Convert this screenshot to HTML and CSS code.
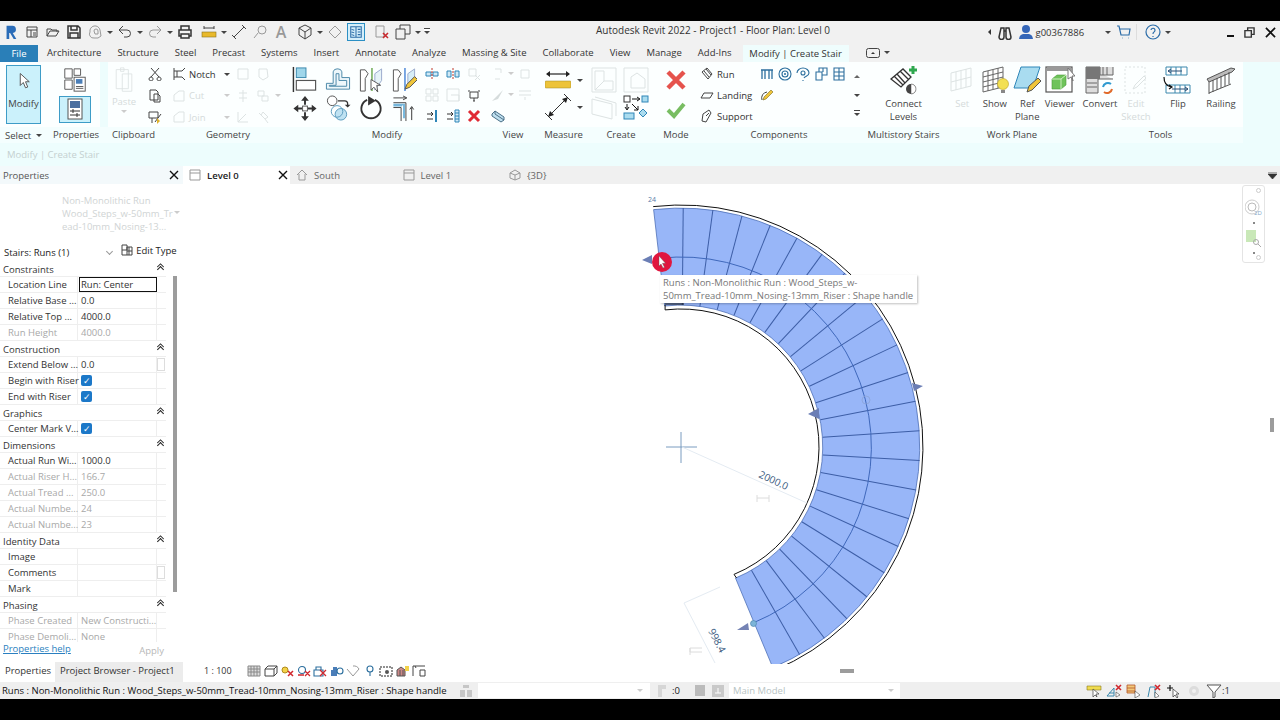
FILE: index.html
```html
<!DOCTYPE html>
<html lang="en">
<head>
  <meta charset="UTF-8" />
  <title>Autodesk Revit 2022 - Project1 - Floor Plan: Level 0</title>
  <link rel="stylesheet" href="styles.css">
</head>
<body>
  <div class="black-bar"></div>

  <!-- Title bar -->
  <header class="title-bar">
    <div class="qat">
      <svg class="qi" viewBox="0 0 16 18"><path d="M3 17V2h6a4 4 0 0 1 1 8l4 7h-3L7 10H6v7z" fill="#2a6cb8"/></svg>
      <svg class="qi" viewBox="0 0 16 16"><path d="M3 3h10v10H3zM3 6h10M7 6v7M9 9h3M9 11h3" class="s-dark"/></svg>
      <svg class="qi" viewBox="0 0 16 16"><path d="M2 12V5h4l1 1h5v2M2 12l3-5h9l-3 5z" class="s-dark"/></svg>
      <svg class="qi" viewBox="0 0 16 16"><path d="M2 2h10l2 2v10H2zM5 2v4h6V2M4 14V9h8v5" class="s-bold"/></svg>
      <svg class="qi" viewBox="0 0 16 16"><path d="M3 8a5 5 0 0 1 10-2l1 6-3 2H7a4 4 0 0 1-4-6zM7 7a2 2 0 0 1 4 0v3H8z" class="s-grey"/></svg>
      <span class="dd"></span>
      <svg class="qi" viewBox="0 0 16 16"><path d="M6 2 2 6l4 4M2 6h8a3.500 3.500 0 0 1 0 7H7" class="s-dark"/></svg>
      <span class="dd"></span>
      <svg class="qi" viewBox="0 0 16 16"><path d="M10 2l4 4-4 4M14 6H6a3.500 3.500 0 0 0 0 7h3" class="s-grey"/></svg>
      <span class="dd"></span>
      <svg class="qi" viewBox="0 0 16 16"><path d="M4 6V2h8v4M4 12H2V6h12v6h-2M4 10h8v4H4z" class="s-bold"/></svg>
      <svg class="qi gap-s" viewBox="0 0 16 16"><path d="M3 2v3M13 2v3M3 4h10" class="s-dark"/><rect x="1" y="8" width="14" height="5" fill="#e9b92b" stroke="#8a7320" stroke-width=".6"/></svg>
      <span class="dd"></span>
      <svg class="qi" viewBox="0 0 16 16"><path d="M3 13 13 3M1 11l4 4M11 1l4 4" class="s-dark"/></svg>
      <svg class="qi" viewBox="0 0 16 16"><circle cx="10" cy="6" r="4" class="s-grey"/><path d="M6 9l-4 5" class="s-grey"/></svg>
      <span class="qa-letter">A</span>
      <svg class="qi gap-s" viewBox="0 0 16 16"><path d="M8 1l6 3v7l-6 4-6-4V4zM2 4l6 4 6-4M8 8v7" class="s-dark"/></svg>
      <span class="dd"></span>
      <svg class="qi" viewBox="0 0 16 16"><path d="M8 2l6 6-6 6-6-6z" class="s-grey"/></svg>
      <div class="qa-active"><svg viewBox="0 0 16 16"><path d="M2 2h12v12H2zM8 2v12M10 5h3M10 8h3M10 11h3M3 5l3 1M3 8l3 1M3 11l3 1" class="s-blue"/></svg></div>
      <svg class="qi gap-m" viewBox="0 0 16 16"><path d="M2 2h8v11H2z" class="s-grey"/><path d="M9 9l5 5M14 9l-5 5" stroke="#c8282d" stroke-width="1.600" fill="none"/></svg>
      <svg class="qi" viewBox="0 0 16 16"><path d="M1 5h9v10H1zM5 5V1h10v9h-5" class="s-dark"/></svg>
      <span class="dd"></span>
      <span class="dd dd-over"></span>
    </div>
    <div class="title-text">Autodesk Revit 2022 - Project1 - Floor Plan: Level 0</div>
    <div class="title-right">
      <span class="dd dd-left"></span>
      <svg class="qi" viewBox="0 0 16 16"><path d="M2 13a2.500 2.500 0 0 0 5 0V4H4zM14 13a2.500 2.500 0 0 1-5 0V4h3zM7 7h2" class="s-bold"/></svg>
      <svg class="qi user" viewBox="0 0 16 16"><circle cx="8" cy="5" r="4" fill="#3566b8"/><path d="M1 15c1-5 3-5 7-5s6 0 7 5z" fill="#3566b8"/></svg>
      <span class="user-name">g00367886</span>
      <span class="dd user-dd"></span>
      <svg class="qi cart" viewBox="0 0 16 16"><path d="M1 2h2l2 9h8l1-6H4M6 14h.5M12 14h.5" class="s-blue"/></svg>
      <span class="sep"></span>
      <svg class="qi help" viewBox="0 0 16 16"><circle cx="8" cy="8" r="7" class="s-blue"/><path d="M6 6a2 2 0 1 1 3 2c-1 .5-1 1-1 2M8 12v1" class="s-blue"/></svg>
      <span class="dd"></span>
      <div class="win-btns">
        <span class="win-min"></span>
        <svg viewBox="0 0 12 12"><path d="M1 4h7v7H1zM4 4V1h7v7H8" class="s-bold"/></svg>
        <svg viewBox="0 0 12 12"><path d="M1 1l10 10M11 1 1 11" stroke="#111" stroke-width="1.800" fill="none"/></svg>
      </div>
    </div>
  </header>

  <!-- Tabs -->
  <nav class="tabs">
    <a class="tab-file">File</a>
    <a>Architecture</a>
    <a>Structure</a>
    <a>Steel</a>
    <a>Precast</a>
    <a>Systems</a>
    <a>Insert</a>
    <a>Annotate</a>
    <a>Analyze</a>
    <a>Massing &amp; Site</a>
    <a>Collaborate</a>
    <a>View</a>
    <a>Manage</a>
    <a>Add-Ins</a>
    <a class="tab-active">Modify | Create Stair</a>
    <svg class="tab-extra" viewBox="0 0 14 10"><rect x=".5" y=".5" width="13" height="9" rx="2" fill="none" stroke="#444"/><path d="M5 6l2-2 2 2z" fill="#333"/></svg>
    <span class="dd"></span>
  </nav>

  <!-- Ribbon -->
  <section class="ribbon">
    <div class="panel p-select">
      <div class="panel-body">
        <div class="modify-btn">
          <svg viewBox="0 0 18 24" width="14" height="18"><path d="M4 2v16l4-4 3 7 3-1-3-7h5z" fill="#fff" stroke="#555" stroke-width="1.300"/></svg>
          <span>Modify</span>
        </div>
      </div>
      <div class="panel-label left">Select <span class="dd"></span></div>
    </div>

    <div class="panel p-props">
      <div class="panel-body col">
        <svg viewBox="0 0 26 28" width="26" height="26"><path d="M2 2h8v10H2zM12 2h7v7h-7zM2 14h8v10H2z" fill="#fff" stroke="#555"/><rect x="12" y="11" width="12" height="15" fill="#fff" stroke="#555"/><rect x="14" y="13" width="7" height="5" fill="#4b7fb8"/><path d="M14 21h8M14 23h8" stroke="#555"/></svg>
        <div class="props-active"><svg viewBox="0 0 20 22" width="20" height="22"><rect x="3" y="1" width="14" height="20" fill="#fff" stroke="#555"/><rect x="5" y="3" width="10" height="7" fill="#4b6fa0"/><path d="M5 13h10M5 17h10M8 11v4M12 15v4" stroke="#333"/></svg></div>
      </div>
      <div class="panel-label">Properties</div>
    </div>

    <div class="panel p-clip">
      <div class="panel-body clip-body">
        <div class="paste">
          <svg viewBox="0 0 22 30" width="22" height="26"><path d="M2 3h14v22H2zM7 1h4v4H7zM9 8h11v20H9z" class="s-off"/></svg>
          <span>Paste</span>
          <span class="dd dd-off"></span>
        </div>
        <div class="stack">
          <svg class="si" viewBox="0 0 14 14"><path d="M3 1l8 9M11 1 3 10M3 10a2 2 0 1 0 .1 0M11 10a2 2 0 1 0 .1 0" class="s-dark"/></svg>
          <svg class="si" viewBox="0 0 14 14"><path d="M2 1h6l2 2v8H2zM6 5h4l2 2v6H6z" class="s-dark"/></svg>
          <svg class="si" viewBox="0 0 14 14"><path d="M1 2h9v6H1zM4 8v5M13 4l-6 8" class="s-dark"/><path d="M9 8l3 3-3 3z" fill="#e0b22a"/></svg>
        </div>
      </div>
      <div class="panel-label">Clipboard</div>
    </div>

    <div class="panel p-geom">
      <div class="panel-body geom-body">
        <div class="geom-row">
          <svg class="si" viewBox="0 0 14 14"><path d="M2 1v12M2 4h8l3-3M2 10h8l3 3M5 4v6" class="s-dark"/></svg>
          <span class="lbl w30">Notch</span><span class="dd"></span>
          <svg class="si off-a" viewBox="0 0 14 14"><path d="M2 2h10v10H2z" class="s-off"/></svg>
          <svg class="si off-b" viewBox="0 0 14 14"><path d="M3 2h8l1 8-5 3-4-3z" class="s-off"/></svg>
        </div>
        <div class="geom-row off">
          <svg class="si" viewBox="0 0 14 14"><path d="M2 12V6l5-4h5v10z" class="s-off"/></svg>
          <span class="lbl w30">Cut</span><span class="dd dd-off"></span>
          <svg class="si off-a" viewBox="0 0 14 14"><path d="M3 4h8M3 9h8M7 1v12" class="s-off"/></svg>
          <svg class="si off-b" viewBox="0 0 14 14"><path d="M2 2h6v5H2zM6 7h6v5H6z" class="s-off"/></svg>
          <span class="dd dd-off"></span>
        </div>
        <div class="geom-row off">
          <svg class="si" viewBox="0 0 14 14"><path d="M2 12V6l5-4h5v10z" class="s-off"/></svg>
          <span class="lbl w30">Join</span><span class="dd dd-off"></span>
          <svg class="si off-a" viewBox="0 0 14 14"><path d="M2 2v10h10M2 12l8-8" class="s-off"/></svg>
          <svg class="si off-b" viewBox="0 0 14 14"><path d="M3 3l5 5M7 2l5 5-3 2-4-4zM9 9l3 4" class="s-off"/></svg>
        </div>
      </div>
      <div class="panel-label">Geometry</div>
    </div>

    <div class="panel p-modify">
      <div class="panel-body">
        <div class="big-grid">
          <svg viewBox="0 0 26 28"><path d="M1 1v26" stroke="#333" stroke-width="1.500"/><rect x="4" y="2" width="10" height="10" fill="#9fd6ea" stroke="#3a88ad"/><rect x="4" y="15" width="20" height="10" fill="#fff" stroke="#555" stroke-width="1.200"/></svg>
          <svg viewBox="0 0 26 28"><path d="M1 24v-6h7V6a4 4 0 0 1 4-3h1a4 4 0 0 1 4 3v6h8v12zM4 21v-1h7V8h3v7h8v6z" fill="#eef7fb" stroke="#4a87a8"/></svg>
          <svg viewBox="0 0 26 28"><path d="M2 4h5l3 4-3 5v13H2z" fill="#fff" stroke="#555"/><path d="M14 2v24" stroke="#6aa84f" stroke-width="1.500"/><path d="M17 8l7-5v12l-7 10z" fill="#e6f3f7" stroke="#9ac"/><path d="M13 14v11l3-3 4 5-1-7h4z" fill="#fff" stroke="#555"/></svg>
          <svg viewBox="0 0 26 28"><path d="M2 4h5l3 4-3 5v13H2z" fill="#fff" stroke="#555"/><path d="M14 2v24" stroke="#4a87d8" stroke-width="1.500"/><path d="M17 8l7-5v10l-7 8z" fill="#d7eef7" stroke="#9ac"/><path d="M14 24l2-5 8-8 3 3-8 8z" fill="#efc53a" stroke="#555"/></svg>
          <svg viewBox="0 0 26 28"><path d="M13 1l4 5h-3v4h-2V6H9zM13 27l4-5h-3v-4h-2v4H9zM1 14l5-4v3h4v2H6v3zM25 14l-5-4v3h-4v2h4v3z" fill="#333"/><rect x="10.500" y="11.500" width="5" height="5" fill="#fff" stroke="#555"/></svg>
          <svg viewBox="0 0 26 28"><circle cx="7" cy="6" r="5" fill="#fff" stroke="#555"/><path d="M13 6h7a3 3 0 0 1 3 3v2" fill="none" stroke="#333" stroke-width="1.300"/><path d="M20 10h6l-3 3z" fill="#333"/><circle cx="16" cy="20" r="6" fill="#bfe2f2" stroke="#5c9bbd"/><circle cx="12" cy="17" r="6" fill="none" stroke="#5c9bbd"/></svg>
          <svg viewBox="0 0 26 28"><path d="M17 5a10 10 0 1 1-8 0" fill="none" stroke="#333" stroke-width="2"/><path d="M10 1l8 5-8 5z" fill="#333"/></svg>
          <svg viewBox="0 0 26 28"><path d="M2 3h13M12 1l4 2-4 2M2 8h13v19M2 13h8v14" fill="none" stroke="#444"/><path d="M2 10h11v14M2 11h9" stroke="#76b7dc" stroke-width="2" fill="none"/><path d="M21 26V13M19 15l2-3 2 3" stroke="#333" fill="none"/></svg>
        </div>
        <div class="small-grid">
          <svg class="si" viewBox="0 0 14 14"><path d="M1 5h5v4H1zM8 5h5v4H8z" fill="#cfe9f6" stroke="#2f86b8"/><path d="M7 1v12" stroke="#c0392b" stroke-dasharray="2 1"/></svg>
          <svg class="si" viewBox="0 0 14 14"><path d="M1 4h4v6H1zM9 4h4v6H9z" fill="#cfe9f6" stroke="#2f86b8"/><path d="M7 1v12" stroke="#c0392b" stroke-dasharray="2 1"/></svg>
          <svg class="si" viewBox="0 0 14 14"><path d="M2 2h7v7H2z" class="s-off"/><path d="M8 8l5 5M13 8l-5 5" class="s-off"/></svg>
          <svg class="si" viewBox="0 0 14 14"><path d="M1 1h5v5H1zM8 1h5v5H8zM1 8h5v5H1zM8 8h5v5H8z" class="s-off"/></svg>
          <svg class="si" viewBox="0 0 14 14"><path d="M1 1h12v12H1zM5 7h8v6" class="s-off"/></svg>
          <svg class="si" viewBox="0 0 14 14"><path d="M3 4h8v6H3zM1 3h2M11 3h2M7 10v3M6 13h2" class="s-dark"/></svg>
          <svg class="si" viewBox="0 0 14 14"><path d="M11 1v12" stroke="#2f86b8" stroke-width="2"/><path d="M2 5h6M6 3l2 2-2 2M2 10h6" stroke="#333" fill="none"/></svg>
          <svg class="si" viewBox="0 0 14 14"><path d="M9 1h4v12H9zM9 4h4M9 7h4M9 10h4" fill="#cfe9f6" stroke="#2f86b8"/><path d="M1 5h6M5 3l2 2-2 2M1 10h6" stroke="#333" fill="none"/></svg>
          <svg class="si" viewBox="0 0 14 14"><path d="M2 2l10 10M12 2 2 12" stroke="#e02b35" stroke-width="3"/></svg>
        </div>
      </div>
      <div class="panel-label">Modify</div>
    </div>

    <div class="panel p-view">
      <div class="panel-body">
        <div class="view-grid">
          <svg class="si" viewBox="0 0 14 14"><path d="M4 2h6v4M4 12h5" class="s-off"/></svg><span class="dd dd-off"></span>
          <svg class="si" viewBox="0 0 14 14"><path d="M3 3h8v8H3z" class="s-off"/></svg>
          <svg class="si" viewBox="0 0 14 14"><path d="M1 13l3-3 8-8-5 9z" fill="#d5dcdc"/></svg><span class="dd dd-off"></span>
          <svg class="si" viewBox="0 0 14 14"><path d="M1 3h12M1 7h12M7 9v3" class="s-off"/></svg>
          <svg class="si" viewBox="0 0 14 14"><path d="M1 5l3-3 9 6v3l-3 2-9-6z" fill="#bfe0f0" stroke="#4a6f86"/><path d="M4 2v3l9 6" fill="none" stroke="#4a6f86"/></svg>
        </div>
      </div>
      <div class="panel-label">View</div>
    </div>

    <div class="panel p-measure">
      <div class="panel-body measure-body">
        <div class="measure-row">
          <svg viewBox="0 0 26 18" width="26" height="18"><path d="M2 3h22" stroke="#222" stroke-width="1.200"/><path d="M5 0 1 3l4 3zM21 0l4 3-4 3z" fill="#222"/><rect x="0" y="10" width="26" height="7" rx="1" fill="#edc33a" stroke="#9c8426" stroke-width=".5"/></svg>
          <span class="dd"></span>
        </div>
        <div class="measure-row">
          <svg viewBox="0 0 26 26" width="26" height="26"><path d="M3 23 23 3M0 19l7 7M19 0l7 7" stroke="#333" fill="none"/><path d="M3 23l6-2-4-4zM23 3l-6 2 4 4z" fill="#222"/></svg>
          <span class="dd"></span>
        </div>
      </div>
      <div class="panel-label">Measure</div>
    </div>

    <div class="panel p-create">
      <div class="panel-body create-grid">
        <svg viewBox="0 0 26 26"><path d="M1 1h24v24H1zM4 4h9v10h9v9H4zM13 14l-9 9" class="s-off"/></svg>
        <svg viewBox="0 0 26 26"><path d="M1 1h24v24H1zM8 10l6-4 8 6v9H8z" class="s-off"/></svg>
        <svg viewBox="0 0 26 26"><path d="M1 4l20 5v15L1 19zM4 2l21 6v13" class="s-off"/></svg>
        <svg viewBox="0 0 26 26"><rect x="1" y="1" width="6" height="6" fill="#fff" stroke="#333"/><path d="M9 4h7M14 2l3 2-3 2M4 9v5M2 12l2 3 2-3M9 9l6 6M15 11v4h-4" stroke="#111" fill="none"/><rect x="19" y="1" width="6" height="6" fill="#aadcef" stroke="#2f86b8"/><rect x="1" y="18" width="10" height="6" fill="#aadcef" stroke="#2f86b8"/><path d="M20 14l4 4-4 4-4-4z" fill="#aadcef" stroke="#2f86b8"/></svg>
      </div>
      <div class="panel-label">Create</div>
    </div>

    <div class="panel p-mode">
      <div class="panel-body mode-col">
        <svg viewBox="0 0 20 20" width="20" height="20"><path d="M2 2l16 16M18 2 2 18" stroke="#e5534d" stroke-width="4.500"/></svg>
        <svg viewBox="0 0 20 18" width="20" height="18"><path d="M2 9l6 6L18 3" fill="none" stroke="#78bd62" stroke-width="4"/></svg>
      </div>
      <div class="panel-label">Mode</div>
    </div>

    <div class="panel p-comp">
      <div class="panel-body comp-body">
        <div class="comp-col">
          <div class="comp-row"><svg class="si" viewBox="0 0 14 14"><path d="M2 5l5-4 5 6-4 5zM4 4l5 6M6 2l5 6" class="s-dark"/></svg><span class="lbl">Run</span></div>
          <div class="comp-row"><svg class="si" viewBox="0 0 14 14"><path d="M1 10l3-5h9l-3 5z" class="s-dark"/></svg><span class="lbl">Landing</span></div>
          <div class="comp-row"><svg class="si" viewBox="0 0 14 14"><path d="M3 5l6-4 2 3-5 9-4-1zM6 7l3-3" class="s-dark"/></svg><span class="lbl">Support</span></div>
        </div>
        <div class="comp-tools">
          <div class="tool-row">
            <svg class="si" viewBox="0 0 14 14"><path d="M1 3h12M2 3v9M5 3v9M9 3v9M12 3v9" stroke="#2c6f9e" stroke-width="1.300" fill="none"/></svg>
            <svg class="si" viewBox="0 0 14 14"><circle cx="7" cy="7" r="6" class="s-teal"/><circle cx="7" cy="7" r="3" class="s-teal"/><circle cx="7" cy="7" r="1" fill="#2c6f9e"/></svg>
            <svg class="si" viewBox="0 0 14 14"><path d="M1 6a6 5 0 0 1 12 0c0 3-4 3-5 5M7 13v1" class="s-teal"/><circle cx="7" cy="6" r="2" class="s-teal"/></svg>
            <svg class="si" viewBox="0 0 14 14"><path d="M5 1h8v7H8v5H2V5h3zM5 5h3v3M9 1v4" class="s-teal"/></svg>
            <svg class="si" viewBox="0 0 14 14"><path d="M2 1h10v12H2zM7 1v12M2 5h10M2 9h10" class="s-teal"/></svg>
          </div>
          <div class="tool-row"><svg class="si" viewBox="0 0 14 14"><path d="M2 12a6 6 0 0 1 5-8" fill="none" stroke="#444"/><path d="M4 9l7-7 2 2-7 7-3 1z" fill="#efc53a" stroke="#7a6a20" stroke-width=".6"/></svg></div>
        </div>
        <div class="comp-arrows"><span class="dd dd-up"></span><span class="dd"></span><span class="dd dd-over"></span></div>
      </div>
      <div class="panel-label">Components</div>
    </div>

    <div class="panel p-multi">
      <div class="panel-body big-row">
        <div class="big-btn w-full">
          <svg viewBox="0 0 30 30"><path d="M2 14l12-10 8 8-10 10zM5 11l9 9M8 9l8 9M11 6l9 9" fill="#fff" stroke="#333" stroke-width="1.300"/><path d="M24 1v8M20 5h8" stroke="#2fa84f" stroke-width="3"/><circle cx="22" cy="24" r="5" fill="#444"/><path d="M22 19a5 5 0 0 1 0 10z" fill="#fff" stroke="#444" stroke-width=".5"/></svg>
          <span>Connect<br>Levels</span>
        </div>
      </div>
      <div class="panel-label">Multistory Stairs</div>
    </div>

    <div class="panel p-plane">
      <div class="panel-body big-row">
        <div class="big-btn w-plane off">
          <svg viewBox="0 0 30 30"><path d="M4 8l20-5v18L4 26zM4 17l20-5M14 5v18M9 7v18M19 4v18" class="s-off"/></svg>
          <span>Set</span>
        </div>
        <div class="big-btn w-plane">
          <svg viewBox="0 0 30 30"><path d="M3 7l20-5v20L3 27zM3 17l20-5M13 5v19M8 6v20M18 3v20M3 12l20-5M3 22l20-5" fill="#fff" stroke="#666"/><circle cx="23" cy="19" r="5.500" fill="#f3e052" stroke="#b99f22" stroke-width=".6"/><rect x="21" y="25" width="4" height="3" fill="#888"/></svg>
          <span>Show</span>
        </div>
        <div class="big-btn w-plane">
          <svg viewBox="0 0 30 30"><path d="M9 2h19l-7 21H2z" fill="#a9dcf0" stroke="#2f86b8"/><path d="M15 27l2-6 9-8 3 3-9 9z" fill="#efc53a" stroke="#555"/></svg>
          <span>Ref<br>Plane</span>
        </div>
        <div class="big-btn w-plane">
          <svg viewBox="0 0 30 30"><rect x="1" y="2" width="26" height="25" fill="#fff" stroke="#555" stroke-width="1.200"/><rect x="2" y="3" width="24" height="3" fill="#999"/><path d="M7 14l5-4h9v10l-5 4H7z" fill="#6fc35a" stroke="#4a9c3a" stroke-width=".6"/><path d="M7 14h9v10M16 14l5-4" stroke="#cdeebe" fill="none"/><path d="M23 3v11l3-2 2 4-1-5h3z" fill="#fff" stroke="#777"/></svg>
          <span>Viewer</span>
        </div>
      </div>
      <div class="panel-label">Work Plane</div>
    </div>

    <div class="panel p-tools">
      <div class="panel-body big-row">
        <div class="big-btn w-conv">
          <svg viewBox="0 0 30 30"><path d="M1 2h14v8h13V2M1 2v26h12V14h15" fill="#ddd" stroke="#666"/><path d="M1 2h14v12H1z" fill="#777"/><path d="M2 18h10M2 22h10M18 2v8M22 2v8" stroke="#666"/><path d="M18 22a5 5 0 0 1 8-3" stroke="#2f9ad0" stroke-width="2" fill="none"/><path d="M27 24a5 5 0 0 1-8 3" stroke="#e06a2a" stroke-width="2" fill="none"/></svg>
          <span>Convert</span>
        </div>
        <div class="big-btn w-edit off">
          <svg viewBox="0 0 30 30"><path d="M4 2h20v26H4z" class="s-off" stroke-dasharray="2 2"/><path d="M12 24l2-4 9-9 2 2-9 9z" class="s-off"/></svg>
          <span>Edit<br>Sketch</span>
        </div>
        <div class="big-btn w-flip">
          <svg viewBox="0 0 30 30"><path d="M3 2h21v8H3zM3 20h24v8H3zM8 2v8M13 2v8M18 2v8M12 20v8M17 20v8M22 20v8" fill="#fff" stroke="#3a88ad"/><path d="M5 6h14M8 4 5 6l3 2M9 24h16M22 22l3 2-3 2" stroke="#2c4f74" fill="none"/><path d="M1 12c0 6 2 9 7 10M6 20l3 2-3 2" stroke="#111" stroke-width="1.200" fill="none"/></svg>
          <span>Flip</span>
        </div>
        <div class="big-btn w-rail">
          <svg viewBox="0 0 30 30"><path d="M1 14 25 3l4 1-3 3L3 17zM3 17v12M7 15v12M11 13v12M15 11v12M19 9v12M23 7v12" fill="#bbb" stroke="#555"/><path d="M3 28l22-9" stroke="#555"/></svg>
          <span>Railing</span>
        </div>
      </div>
      <div class="panel-label">Tools</div>
    </div>
  </section>

  <div class="options-bar">Modify | Create Stair</div>

  <!-- Main -->
  <main class="workspace">
    <aside class="props">
      <div class="props-head"><span>Properties</span><svg viewBox="0 0 10 10" width="10" height="10"><path d="M1 1l8 8M9 1 1 9" stroke="#111" stroke-width="1.400"/></svg></div>
      <div class="type-sel">
        <div>Non-Monolithic Run<br>Wood_Steps_w-50mm_Tr<br>ead-10mm_Nosing-13...</div>
        <span class="dd dd-off"></span>
      </div>
      <div class="inst-row">
        <span>Stairs: Runs (1)</span>
        <span class="chev"></span>
        <svg viewBox="0 0 12 12" width="12" height="12"><path d="M1 1h5v5H1zM6 3h5v8H6zM1 6v5h5M6 7h5M8 3v8" class="s-dark"/></svg>
        <span class="edit-type">Edit Type</span>
      </div>
      <div class="prop-list">
        <div class="prop-group">Constraints<i></i></div>
        <div class="prop-row"><span>Location Line</span><span class="val-box">Run: Center</span></div>
        <div class="prop-row"><span>Relative Base ...</span><span>0.0</span></div>
        <div class="prop-row"><span>Relative Top ...</span><span>4000.0</span></div>
        <div class="prop-row muted"><span>Run Height</span><span>4000.0</span></div>
        <div class="prop-group">Construction<i></i></div>
        <div class="prop-row"><span>Extend Below ...</span><span>0.0</span><b class="mini"></b></div>
        <div class="prop-row"><span>Begin with Riser</span><span><em class="check">✓</em></span></div>
        <div class="prop-row"><span>End with Riser</span><span><em class="check">✓</em></span></div>
        <div class="prop-group">Graphics<i></i></div>
        <div class="prop-row"><span>Center Mark V...</span><span><em class="check">✓</em></span></div>
        <div class="prop-group">Dimensions<i></i></div>
        <div class="prop-row"><span>Actual Run Wi...</span><span>1000.0</span></div>
        <div class="prop-row muted"><span>Actual Riser H...</span><span>166.7</span></div>
        <div class="prop-row muted"><span>Actual Tread ...</span><span>250.0</span></div>
        <div class="prop-row muted"><span>Actual Numbe...</span><span>24</span></div>
        <div class="prop-row muted"><span>Actual Numbe...</span><span>23</span></div>
        <div class="prop-group">Identity Data<i></i></div>
        <div class="prop-row"><span>Image</span><span></span></div>
        <div class="prop-row"><span>Comments</span><span></span><b class="mini"></b></div>
        <div class="prop-row"><span>Mark</span><span></span></div>
        <div class="prop-group">Phasing<i></i></div>
        <div class="prop-row muted"><span>Phase Created</span><span>New Constructi...</span></div>
        <div class="prop-row muted"><span>Phase Demoli...</span><span>None</span></div>
        <div class="prop-scroll"></div>
      </div>
      <div class="props-foot"><a>Properties help</a><span>Apply</span></div>
      <div class="props-tabs"><span class="on">Properties</span><span>Project Browser - Project1</span></div>
    </aside>

    <div class="view-area">
      <div class="view-tabs">
        <div class="vtab vtab-on">
          <svg viewBox="0 0 12 12" width="12" height="12"><path d="M1 1h10v10H1zM1 4h10" class="s-grey"/></svg>
          <span>Level 0</span>
          <svg class="vtab-x" viewBox="0 0 10 10" width="10" height="10"><path d="M1 1l8 8M9 1 1 9" stroke="#111" stroke-width="1.400"/></svg>
        </div>
        <div class="vtab"><svg viewBox="0 0 12 12" width="12" height="12"><path d="M1 6l5-5 5 5M3 5v6h6V5" class="s-grey"/></svg><span>South</span></div>
        <div class="vtab"><svg viewBox="0 0 12 12" width="12" height="12"><path d="M1 1h10v10H1zM1 4h10" class="s-grey"/></svg><span>Level 1</span></div>
        <div class="vtab"><svg viewBox="0 0 12 12" width="12" height="12"><path d="M6 1l5 3v5l-5 2-5-2V4zM1 4l5 2 5-2M6 6v5" class="s-grey"/></svg><span>{3D}</span></div>
        <svg class="vtab-more" viewBox="0 0 9 7" width="9" height="7"><path d="M0 0h9M0 2h9l-4.500 5z" stroke="#333" fill="#333" stroke-width=".7"/></svg>
      </div>

      <div class="canvas">
        <svg class="drawing" viewBox="186 184 1094 498" width="1094" height="498">
          <defs>
            <line id="riser" x1="681" y1="305" x2="681" y2="208" stroke="#3d5ea6" stroke-width="1"/>
          </defs>
          <!-- stair run: centre 681,447 -->
          <path d="M653.600 209.600A239 239 0 0 1 772.800 667.600L735.500 578.100A142 142 0 0 0 664.700 306Z" fill="#98b6f8" stroke="#3f63ad" stroke-width=".7"/>
          <use href="#riser" transform="rotate(.53 681 447)"/>
          <use href="#riser" transform="rotate(7.66 681 447)"/>
          <use href="#riser" transform="rotate(14.79 681 447)"/>
          <use href="#riser" transform="rotate(21.92 681 447)"/>
          <use href="#riser" transform="rotate(29.05 681 447)"/>
          <use href="#riser" transform="rotate(36.18 681 447)"/>
          <use href="#riser" transform="rotate(43.31 681 447)"/>
          <use href="#riser" transform="rotate(50.44 681 447)"/>
          <use href="#riser" transform="rotate(57.57 681 447)"/>
          <use href="#riser" transform="rotate(64.70 681 447)"/>
          <use href="#riser" transform="rotate(71.83 681 447)"/>
          <use href="#riser" transform="rotate(78.96 681 447)"/>
          <use href="#riser" transform="rotate(86.09 681 447)"/>
          <use href="#riser" transform="rotate(93.22 681 447)"/>
          <use href="#riser" transform="rotate(100.35 681 447)"/>
          <use href="#riser" transform="rotate(107.48 681 447)"/>
          <use href="#riser" transform="rotate(114.61 681 447)"/>
          <use href="#riser" transform="rotate(121.74 681 447)"/>
          <use href="#riser" transform="rotate(128.87 681 447)"/>
          <use href="#riser" transform="rotate(136 681 447)"/>
          <use href="#riser" transform="rotate(143.13 681 447)"/>
          <use href="#riser" transform="rotate(150.26 681 447)"/>
          <!-- walk line -->
          <path d="M659.100 258.300A190 190 0 0 1 753.900 622.600" fill="none" stroke="#3f68bb" stroke-width="1"/>
          <!-- boundaries -->
          <path d="M653.200 206.600A242 242 0 0 1 774 670.400" fill="none" stroke="#111" stroke-width="1"/>
          <path d="M665.100 305V309.900A138 138 0 0 1 734 574.400L736.500 578" fill="none" stroke="#111" stroke-width="1"/>
          <path d="M665 304H684" stroke="#111" stroke-width="1"/>
          <!-- view crop at the bottom -->
          <rect x="186" y="664" width="900" height="18" fill="#fff"/>
          <!-- centre mark and dimensions -->
          <path d="M666 447H697M681 432V463" stroke="#7b9cc0" stroke-width="1"/>
          <path d="M682 447 807 503" stroke="#e4ebf2" stroke-width="1"/>
          <text x="0" y="0" transform="translate(758 477) rotate(25)" class="dim">2000.0</text>
          <path d="M757 495v7M769 495v7M757 498h12" stroke="#dcdcdc" fill="none"/>
          <path d="M684 603 715 663M684 603 720 587" stroke="#e4ebf2" fill="none"/>
          <text x="0" y="0" transform="translate(708 631) rotate(62)" class="dim">998.4</text>
          <path d="M690 648v7M702 648H690v4h12" stroke="#dcdcdc" fill="none"/>
          <text x="648" y="202" class="dim-s">24</text>
          <!-- shape handles -->
          <path d="M642 260l10-5v9z" fill="#6b7eb5"/>
          <path d="M912 383l11 3-9 5z" fill="#6b7eb5"/>
          <path d="M808 414l11-6v11z" fill="#6b7eb5"/>
          <path d="M737 630l11-7 1 7z" fill="#7583b4"/>
          <circle cx="753.500" cy="623.500" r="3" fill="#7cb4d8" stroke="#4f88b0" stroke-width=".7"/>
          <circle cx="866" cy="400" r="4" fill="none" stroke="#8aa2d4" stroke-width=".7"/>
          <!-- cursor highlight -->
          <circle cx="662" cy="262" r="10" fill="#e0163f"/>
          <path d="M659 256v10l2-2 2 4 1.500-.700-2-4h3z" fill="#fff" stroke="#555" stroke-width=".4"/>
        </svg>

        <div class="tooltip">Runs : Non-Monolithic Run : Wood_Steps_w-<br>50mm_Tread-10mm_Nosing-13mm_Riser : Shape handle</div>

        <div class="nav-bar">
          <i class="nav-dot nav-top"></i>
          <svg viewBox="0 0 18 20" width="18" height="20"><circle cx="7" cy="9" r="4" fill="none" stroke="#bbb"/><circle cx="7" cy="9" r="7" fill="none" stroke="#ccc"/><text x="9" y="17" class="nav-2d">2D</text></svg>
          <i class="nav-pip"></i>
          <svg viewBox="0 0 18 20" width="18" height="20"><rect x="1" y="2" width="10" height="12" fill="#c9e8b8"/><circle cx="11" cy="14" r="2.500" fill="none" stroke="#aaa"/><path d="M13 16l3 3" stroke="#aaa"/></svg>
          <i class="nav-pip"></i>
          <i class="nav-dot nav-bot"></i>
        </div>

        <div class="vscroll"></div>
        <div class="hscroll"></div>

        <div class="view-ctrl">
          <span class="scale">1 : 100</span>
          <svg viewBox="0 0 14 12" width="14" height="12"><path d="M1 1h12v10H1zM1 4h12M1 7h12M4 1v10M7 1v10M10 1v10" stroke="#888" fill="#ddd"/></svg>
          <svg viewBox="0 0 14 12" width="14" height="12"><path d="M1 4h9v7H1zM1 4l3-3h9v7l-3 3M10 4l3-3" class="s-dark"/></svg>
          <svg viewBox="0 0 14 12" width="14" height="12"><circle cx="5" cy="5" r="3" fill="#f3d24a" stroke="#b08b1c"/><path d="M8 6l5 5M13 6l-5 5" stroke="#d0282e" stroke-width="1.500"/></svg>
          <svg viewBox="0 0 14 12" width="14" height="12"><circle cx="5" cy="5" r="3.500" class="s-teal"/><path d="M1 10h6M8 6l5 5M13 6l-5 5" stroke="#d0282e" stroke-width="1.300" fill="none"/></svg>
          <svg viewBox="0 0 14 12" width="14" height="12"><path d="M1 5h9v6H1zM3 5V2h5v3" class="s-teal"/><path d="M7 5l6 6M13 5l-6 6" stroke="#d0282e" stroke-width="1.300"/></svg>
          <svg viewBox="0 0 14 12" width="14" height="12"><path d="M1 5h6v6H1zM3 5V2h4v3" fill="#4a7db8"/><circle cx="10" cy="6" r="3" class="s-teal"/></svg>
          <svg viewBox="0 0 14 12" width="14" height="12"><path d="M1 4l6 7 6-7a6 6 0 0 0-6-3" class="s-grey"/></svg>
          <svg viewBox="0 0 14 12" width="14" height="12"><circle cx="7" cy="4" r="3" class="s-teal"/><path d="M7 7v4" class="s-teal"/></svg>
          <svg viewBox="0 0 14 12" width="14" height="12"><path d="M1 2h12v9H1z" stroke="#222" fill="none" stroke-dasharray="2 1"/><circle cx="8" cy="7" r="2" fill="#555"/></svg>
          <svg viewBox="0 0 14 12" width="14" height="12"><path d="M1 5l4-3 4 3v6H1zM4 5v6M7 5v6" fill="#c88" stroke="#555"/><path d="M9 1h4v5H9z" fill="#f3d24a"/></svg>
          <svg viewBox="0 0 14 12" width="14" height="12"><path d="M1 1v10M1 1h12M3 1l1 2M8 5h5v6H8z" class="s-dark"/></svg>
        </div>
      </div>
    </div>
  </main>

  <!-- Status bar -->
  <footer class="status">
    <span class="status-text">Runs : Non-Monolithic Run : Wood_Steps_w-50mm_Tread-10mm_Nosing-13mm_Riser : Shape handle</span>
    <svg class="st-wk" viewBox="0 0 14 14" width="14" height="14"><path d="M4 1h6v3H4zM1 6h5v7H1zM8 6h5v7H8z" fill="#c6c6c6"/></svg>
    <div class="st-field st-wf"><span class="dd dd-off"></span></div>
    <svg class="st-sync" viewBox="0 0 12 14" width="12" height="14"><path d="M3 1h8v4H7v8H3z" fill="#d6d6d6"/></svg>
    <span class="st-zero">:0</span>
    <span class="st-box"></span>
    <svg class="st-wk2" viewBox="0 0 12 12" width="12" height="12"><rect width="12" height="12" fill="#c9c9c9"/><path d="M3 8h6M6 3v5" stroke="#fff"/></svg>
    <div class="st-field st-model"><span>Main Model</span><span class="dd dd-off"></span></div>
    <div class="st-right">
      <svg viewBox="0 0 16 14" width="16" height="14"><path d="M1 2h14v4H1z" fill="#f0dc50" stroke="#8a7b20" stroke-width=".6"/><path d="M7 5v8l2-2 2 2-1-3h3z" fill="#fff" stroke="#444" stroke-width=".7"/></svg>
      <svg viewBox="0 0 16 14" width="16" height="14"><path d="M1 12 8 4v8zM3 9h5" fill="none" stroke="#3a88ad"/><path d="M10 1l5 5M15 1l-5 5" stroke="#d0282e" stroke-width="1.600"/><path d="M10 8v5l4-2z" fill="#fff" stroke="#444" stroke-width=".6"/></svg>
      <svg viewBox="0 0 16 14" width="16" height="14"><path d="M1 1h8v8H1zM1 4h8M1 7h8" fill="#f2c87a" stroke="#b4562a" stroke-width=".8"/><path d="M9 7v7l5-3z" fill="#fff" stroke="#444" stroke-width=".6"/></svg>
      <svg viewBox="0 0 16 14" width="16" height="14"><path d="M2 13 4 3h5v10" fill="none" stroke="#3a88ad"/><path d="M9 1l5 5M14 1 9 6" stroke="#d0282e" stroke-width="1.600"/><path d="M9 8v6l4-2z" fill="#fff" stroke="#444" stroke-width=".6"/></svg>
      <svg viewBox="0 0 16 14" width="16" height="14"><path d="M1 4h6M4 1v6" stroke="#111" stroke-width="1.200"/><path d="M7 5v8l2-2 2 3 1-1-2-3h3z" fill="#fff" stroke="#333" stroke-width=".7"/></svg>
      <svg viewBox="0 0 16 14" width="16" height="14"><circle cx="8" cy="7" r="5" fill="#dcdcdc"/><circle cx="8" cy="7" r="2" fill="#f0f0f0"/></svg>
      <svg viewBox="0 0 16 14" width="16" height="14"><path d="M1 1h14L9 8v5l-2 1V8z" fill="#fff" stroke="#555"/></svg>
      <span class="st-one">:1</span>
    </div>
  </footer>
  <div class="black-bar"></div>
</body>
</html>
```

FILE: styles.css
```css
* {
  box-sizing: border-box;
}

html, body {
  margin: 0;
  height: 720px;
  overflow: hidden;
}

body {
  font-family: 'Open Sans', 'Noto Sans', sans-serif;
  font-size: 9.500px;
  color: #333;
  background: #000;
  display: flex;
  flex-direction: column;
}

svg {
  display: block;
  flex: none;
}

.black-bar {
  height: 21px;
  background: #000;
  flex: none;
}

/* shared strokes */
.s-dark { fill: none; stroke: #444; stroke-width: 1; }
.s-bold { fill: none; stroke: #333; stroke-width: 1.5; }
.s-grey { fill: none; stroke: #999; stroke-width: 1; }
.s-blue { fill: none; stroke: #2b6ca8; stroke-width: 1.200; }
.s-teal { fill: none; stroke: #2c6f9e; stroke-width: 1.100; }
.s-off { fill: none; stroke: #dde3e3; stroke-width: 1; }

.dd {
  width: 0;
  height: 0;
  flex: none;
  margin: 0 1.500px;
  border: 3px solid transparent;
  border-top: 3px solid #444;
  border-bottom-width: 0;
}

.dd-off { border-top-color: #ccc; }
.dd-up { border-top-width: 0; border-bottom: 3px solid #666; }
.dd-left { border: 3px solid transparent; border-right-color: #333; border-left-width: 0; }

.dd-over {
  border-top: 3px solid #444;
  box-shadow: 0 -2px 0 0 #fff, 0 -3px 0 0 #444;
}

/* title bar */
.title-bar {
  height: 22px;
  background: #f1f1f1;
  display: flex;
  align-items: center;
  position: relative;
  flex: none;
}

.qat {
  display: flex;
  align-items: center;
  gap: 5px;
  padding-left: 3px;
}

.qi {
  width: 16px;
  height: 16px;
}

.qat .dd {
  margin: 0 -1px;
  width: 6px;
}

.gap-s { margin-left: 3px; }
.gap-m { margin-left: 5px; }

.qa-letter {
  width: 16px;
  text-align: center;
  font-size: 16px;
  line-height: 16px;
  font-weight: 600;
  color: #999;
}

.qa-active {
  width: 18px;
  height: 18px;
  margin: 0 -1px;
  padding: 1px;
  background: #d4eefa;
  border: 1px solid #2b8fc4;
}

.title-text {
  position: absolute;
  left: 596px;
  top: 3px;
  line-height: 12px;
  font-size: 10px;
  white-space: nowrap;
}

.title-right {
  margin-left: auto;
  display: flex;
  align-items: center;
}

.title-right .dd-left { margin: 0 6px 0 0; }
.title-right .user { margin-left: 5px; }
.user-name { margin-left: 2px; width: 60px; }
.user-dd { margin: 0 4.500px 0 9.500px; }
.title-right .sep { width: 1px; height: 16px; margin: 0 4px; background: #ddd; }
.title-right .help { margin: 0 2.500px 0 4px; }

.win-btns {
  display: flex;
  align-items: center;
  gap: 10px;
  margin: 0 4px 0 55px;
}

.win-btns svg {
  width: 11px;
  height: 11px;
}

.win-min {
  width: 7px;
  height: 2px;
  margin-top: 7px;
  background: #111;
}

/* tabs */
.tabs {
  height: 19px;
  background: #f1f1f1;
  display: flex;
  align-items: stretch;
  flex: none;
}

.tabs a {
  color: #333;
  padding: 0 8px;
  line-height: 19px;
  white-space: nowrap;
}

.tabs .tab-file {
  width: 38px;
  padding: 0;
  margin: 2px 1px 0 0;
  line-height: 17px;
  text-align: center;
  background: #2a7fb8;
  color: #fff;
}

.tabs .tab-active {
  width: 106px;
  padding: 0;
  margin: 2px 0 0 3px;
  line-height: 17px;
  text-align: center;
  background: #effdfd;
}

.tab-extra {
  width: 14px;
  height: 10px;
  margin: 5px 3px 0 17px;
}

.tabs .dd {
  margin-top: 8px;
}

/* ribbon */
.ribbon {
  height: 81px;
  background: #edfdfd;
  display: flex;
  flex: none;
}

.panel {
  display: flex;
  flex-direction: column;
  flex: none;
}

.panel-body {
  height: 65px;
  background: #fcffff;
  display: flex;
}

.panel-label {
  height: 16px;
  line-height: 15px;
  text-align: center;
  color: #444;
  background: #f4fefe;
  white-space: nowrap;
}

.panel-label.left {
  text-align: left;
  padding-left: 5px;
  display: flex;
  align-items: center;
  gap: 3px;
}

.p-select { width: 50px; }
.p-props { width: 58px; }
.p-clip { width: 60px; }
.p-geom { width: 120px; }
.p-modify { width: 198px; }
.p-view { width: 54px; }
.p-measure { width: 47px; }
.p-create { width: 68px; }
.p-mode { width: 42px; }
.p-comp { width: 164px; }
.p-multi { width: 85px; }
.p-plane { width: 132px; }
.p-tools { width: 165px; }

.p-clip .panel-label { text-align: left; padding-left: 4px; }
.p-props .panel-label { text-align: left; padding-left: 3px; }

.modify-btn {
  width: 35px;
  height: 59px;
  margin: 3px 0 0 6px;
  background: #cbf1fb;
  border: 1px solid #3d9cc7;
  display: flex;
  flex-direction: column;
  align-items: center;
  padding-top: 6px;
  gap: 7px;
  color: #444;
}

.col {
  flex-direction: column;
  align-items: center;
  width: 50px;
  padding-top: 5px;
  gap: 3px;
}

.props-active {
  width: 32px;
  height: 27px;
  padding: 1px 5px;
  background: #cbf1fb;
  border: 1px solid #3d9cc7;
}

.clip-body {
  gap: 12px;
  padding: 5px 0 0 4px;
}

.paste {
  width: 24px;
  display: flex;
  flex-direction: column;
  align-items: center;
  color: #d5dbdb;
  gap: 2px;
}

.stack {
  display: flex;
  flex-direction: column;
  gap: 7.500px;
}

.si {
  width: 14px;
  height: 14px;
}

.geom-body {
  flex-direction: column;
  padding: 5px 0 0 4px;
  gap: 7.500px;
}

.geom-row {
  height: 14px;
  display: flex;
  align-items: center;
  gap: 3px;
}

.geom-row.off { color: #d5dbdb; }
.lbl { white-space: nowrap; }
.w30 { width: 30px; }
.off-a { margin-left: 2px; }
.off-b { margin-left: 3px; }

.big-grid {
  display: grid;
  grid-template-columns: repeat(4, 33px);
  grid-template-rows: 29px 29px;
  justify-items: center;
  align-items: center;
  padding-top: 3px;
}

.big-grid svg {
  width: 26px;
  height: 27px;
}

.small-grid {
  display: grid;
  grid-template-columns: repeat(3, 21px);
  grid-template-rows: repeat(3, 21px);
  justify-items: center;
  align-items: center;
  padding-top: 1px;
  margin-left: 1px;
}

.view-grid {
  display: grid;
  grid-template-columns: 14px 12px 16px;
  grid-template-rows: repeat(3, 21px);
  justify-items: center;
  align-items: center;
  padding: 1px 0 0 5px;
}

.measure-body {
  flex-direction: column;
  padding: 9px 0 0 5px;
  gap: 5px;
}

.measure-row {
  display: flex;
  align-items: center;
  gap: 4px;
}

.create-grid {
  display: grid;
  grid-template-columns: 32px 30px;
  grid-template-rows: 28px 28px;
  padding: 4px 0 0 4px;
  align-items: center;
}

.create-grid svg {
  width: 26px;
  height: 26px;
}

.mode-col {
  flex-direction: column;
  align-items: center;
  gap: 11px;
  padding-top: 8px;
}

.comp-body {
  padding: 5px 0 0 3px;
}

.comp-col {
  width: 60px;
  display: flex;
  flex-direction: column;
  gap: 7px;
}

.comp-row {
  height: 14px;
  display: flex;
  align-items: center;
  gap: 3px;
}

.comp-tools {
  display: flex;
  flex-direction: column;
  gap: 7px;
  width: 92px;
}

.tool-row {
  display: flex;
  gap: 4px;
  height: 14px;
}

.comp-arrows {
  display: flex;
  flex-direction: column;
  gap: 16px;
  padding-top: 8px;
}

.big-row {
  justify-content: flex-start;
}

.big-btn {
  display: flex;
  flex-direction: column;
  align-items: center;
  text-align: center;
  line-height: 13px;
  padding-top: 3px;
  color: #444;
  flex: none;
}

.big-btn svg {
  width: 30px;
  height: 30px;
  margin-bottom: 2px;
}

.big-btn.off { color: #d5dbdb; }
.w-full { width: 85px; }
.w-plane { width: 32.500px; }
.w-conv { width: 44px; }
.w-edit { width: 28px; }
.w-flip { width: 56px; }
.w-rail { width: 30px; }

.options-bar {
  height: 23px;
  line-height: 24px;
  padding-left: 7px;
  background: #edfdfd;
  color: #c4d0d0;
  flex: none;
}

/* main */
.workspace {
  height: 516px;
  background: #fff;
  display: flex;
  flex: none;
}

.props {
  width: 183px;
  margin-right: 3px;
  background: #fff;
  display: flex;
  flex-direction: column;
  flex: none;
}

.props-head {
  height: 18px;
  padding: 0 4px 0 3px;
  display: flex;
  align-items: center;
  justify-content: space-between;
  background: #f3f9fb;
  color: #555;
}

.type-sel {
  height: 60px;
  padding: 10px 2px 0 62px;
  display: flex;
  line-height: 13px;
  color: #d0d4d4;
  white-space: nowrap;
  position: relative;
}

.type-sel .dd {
  position: absolute;
  left: 172px;
  top: 27px;
}

.inst-row {
  height: 17px;
  padding-left: 4px;
  display: flex;
  align-items: center;
  color: #222;
}

.chev {
  width: 5px;
  height: 5px;
  margin: -2px 9px 0 38px;
  border-right: 1px solid #999;
  border-bottom: 1px solid #999;
  transform: rotate(45deg);
}

.inst-row svg {
  margin-top: -5px;
}

.edit-type {
  margin: -5px 0 0 3px;
  white-space: nowrap;
}

.prop-list {
  height: 381px;
  position: relative;
  overflow: hidden;
}

.prop-group {
  height: 16px;
  width: 166px;
  padding-left: 3px;
  line-height: 17px;
  color: #333;
  border-bottom: 1px solid #eee;
  position: relative;
}

.prop-group i {
  position: absolute;
  left: 158px;
  top: 6px;
  width: 5px;
  height: 5px;
  border-top: 1px solid #222;
  border-left: 1px solid #222;
  transform: rotate(45deg);
  box-shadow: -1px -1px 0 0 #fff, -2px -2px 0 0 #222;
}

.prop-row {
  height: 16px;
  width: 166px;
  display: grid;
  grid-template-columns: 78px 79px 9px;
  line-height: 15px;
  border-bottom: 1px solid #eee;
  position: relative;
}

.prop-row span {
  white-space: nowrap;
}

.prop-row span:first-child {
  padding-left: 8px;
  border-right: 1px solid #eee;
}

.prop-row span:nth-child(2) {
  padding-left: 3px;
  border-right: 1px solid #eee;
}

.prop-row.muted { color: #a8a8a8; }

.prop-row span.val-box {
  border: 1px solid #111;
  line-height: 13px;
  padding-left: 1px;
  height: 15px;
  margin-left: 1px;
}

.mini {
  width: 8px;
  height: 13px;
  margin-top: 1px;
  border: 1px solid #ddd;
}

.check {
  display: block;
  width: 11px;
  height: 11px;
  margin-top: 2px;
  border-radius: 2px;
  background: #1c78c8;
  color: #fff;
  font-size: 9px;
  line-height: 11px;
  font-style: normal;
  text-align: center;
}

.prop-scroll {
  position: absolute;
  left: 173px;
  top: 15px;
  width: 4px;
  height: 316px;
  background: #9c9c9c;
}

.props-foot {
  height: 20px;
  display: flex;
  justify-content: space-between;
  align-items: flex-start;
  line-height: 14px;
  padding: 0 19px 0 3px;
  color: #b8b8b8;
}

.props-foot a {
  color: #2a7fc0;
  text-decoration: underline;
}

.props-foot span {
  margin-top: 2px;
}

.props-tabs {
  height: 20px;
  display: flex;
  background: #ececec;
  line-height: 17px;
  flex: none;
}

.props-tabs span {
  padding-left: 5px;
  white-space: nowrap;
}

.props-tabs .on {
  width: 55px;
  background: #fff;
}

.view-area {
  flex: 1;
  display: flex;
  flex-direction: column;
  min-width: 0;
}

.view-tabs {
  height: 18px;
  background: #f0f0f0;
  display: flex;
  align-items: center;
  position: relative;
  flex: none;
}

.vtab {
  width: 106.500px;
  height: 18px;
  padding-left: 6px;
  display: flex;
  align-items: center;
  gap: 6px;
  color: #666;
  flex: none;
}

.vtab-on {
  width: 104px;
  background: #fff;
  color: #222;
  font-weight: 600;
  padding-left: 3px;
  position: relative;
}

.vtab-x {
  position: absolute;
  left: 92px;
  top: 4px;
}

.vtab-more {
  position: absolute;
  right: 3px;
  top: 6px;
}

.canvas {
  flex: 1;
  position: relative;
  background: #fff;
  overflow: hidden;
}

.drawing {
  position: absolute;
  left: 0;
  top: 0;
}

.dim {
  font-family: 'Open Sans', sans-serif;
  font-size: 10px;
  fill: #3a5a80;
}

.dim-s {
  font-family: 'Open Sans', sans-serif;
  font-size: 7px;
  fill: #5a7ca8;
}

.tooltip {
  position: absolute;
  left: 474px;
  top: 91px;
  width: 257px;
  height: 28px;
  padding: 1px 3px;
  background: #fff;
  box-shadow: 1px 1px 2px rgba(0, 0, 0, 0.25);
  color: #777;
  line-height: 13px;
  white-space: nowrap;
}

.nav-bar {
  position: absolute;
  left: 1056px;
  top: 1px;
  width: 23px;
  height: 78px;
  border: 1px solid #e4e4e4;
  border-radius: 3px;
  display: flex;
  flex-direction: column;
  align-items: center;
  gap: 4px;
  padding-top: 12px;
}

.nav-dot {
  position: absolute;
  width: 5px;
  height: 5px;
  right: 3px;
  border: 1px solid #ccc;
  border-radius: 50%;
}

.nav-top { top: 2px; }
.nav-bot { bottom: 2px; }

.nav-pip {
  width: 2px;
  height: 2px;
  background: #888;
}

.nav-2d {
  font-size: 6px;
  fill: #7ea6c8;
}

.vscroll {
  position: absolute;
  left: 1084px;
  top: 234px;
  width: 4px;
  height: 14px;
  background: #9c9c9c;
}

.hscroll {
  position: absolute;
  left: 654px;
  top: 485px;
  width: 14px;
  height: 4px;
  background: #9c9c9c;
}

.view-ctrl {
  position: absolute;
  left: 0;
  bottom: 3px;
  height: 17px;
  padding-left: 18px;
  display: flex;
  align-items: center;
  gap: 2.500px;
}

.scale {
  width: 40.500px;
  color: #333;
  font-size: 9px;
  white-space: nowrap;
}

/* status bar */
.status {
  height: 17px;
  background: #efefef;
  display: flex;
  align-items: center;
  padding-left: 2px;
  position: relative;
  flex: none;
}

.status-text {
  width: 457px;
  color: #111;
  white-space: nowrap;
}

.st-field {
  height: 15px;
  background: #fff;
  display: flex;
  align-items: center;
  justify-content: space-between;
  flex: none;
}

.st-wf { width: 172px; margin-left: 5px; padding-right: 6px; justify-content: flex-end; }
.st-sync { margin-left: 5px; }
.st-zero { margin-left: 5px; width: 23px; color: #222; }
.st-box { width: 10px; height: 11px; background: #bbb; }
.st-wk2 { margin-left: 7px; }
.st-model { width: 171px; margin-left: 5px; padding: 0 5px 0 4px; color: #b8c4c4; }

.st-right {
  margin-left: auto;
  display: flex;
  align-items: center;
  gap: 4px;
  padding-right: 50px;
}

.st-one {
  color: #333;
  margin-left: -4px;
}
```
